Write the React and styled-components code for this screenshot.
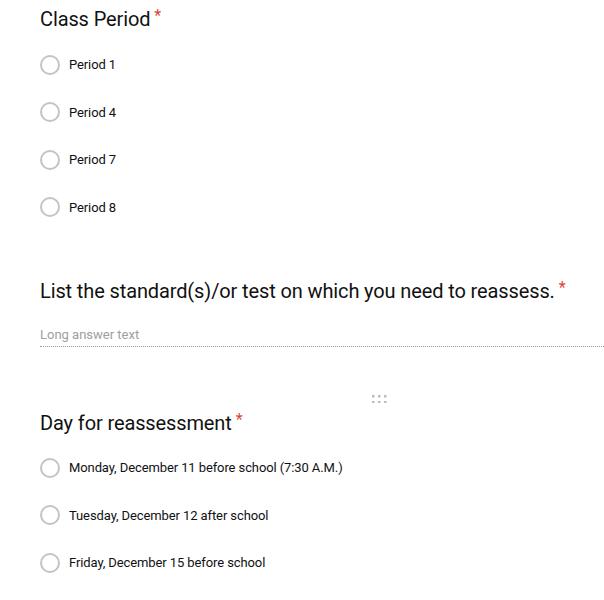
import React from 'react';
import styled, { createGlobalStyle } from 'styled-components';

const GlobalStyle = createGlobalStyle`
  html, body {
    margin: 0;
    padding: 0;
    background: #fff;
  }
  body {
    font-family: Roboto, "Liberation Sans", Arial, sans-serif;
    color: #000;
  }
`;

const Form = styled.div`
  width: 564px;
  padding: 7px 0 0 40px;
`;

const Question = styled.section`
  display: flex;
  flex-direction: column;
  margin-bottom: ${({ $gap }) => $gap || 0}px;
`;

const Title = styled.h2`
  margin: 0 0 ${({ $after }) => $after || 10}px;
  font-size: 20px;
  line-height: 24px;
  font-weight: 400;
  color: #111;
  letter-spacing: -0.12px;
  white-space: nowrap;
`;

const Required = styled.span`
  color: #db4437;
  font-size: 16px;
  vertical-align: top;
  margin-left: 4px;
  position: relative;
  top: -3px;
`;

const Options = styled.div`
  display: flex;
  flex-direction: column;
`;

const OptionRow = styled.label`
  display: flex;
  align-items: center;
  height: 47.5px;
  gap: 9px;
  font-size: 13px;
  letter-spacing: -0.1px;
  color: #111;
`;

const Circle = styled.span`
  box-sizing: border-box;
  width: 20px;
  height: 20px;
  border-radius: 50%;
  border: 2px solid #c4c4c4;
  flex: none;
`;

const LongAnswer = styled.div`
  margin-top: 14px;
  font-size: 13px;
  line-height: 16px;
  color: #9e9e9e;
  padding-bottom: 3px;
  border-bottom: 1px dotted rgba(0, 0, 0, 0.4);
`;

const HandleRow = styled.div`
  display: flex;
  padding-left: 331px;
  margin: 48px 0 8px;
`;

const Dots = styled.svg`
  display: block;
`;

const DragHandle = () => (
  <Dots width="16" height="8" viewBox="0 0 16 8">
    {[0, 6, 12].map((x) =>
      [0, 6].map((y) => (
        <rect key={`${x}-${y}`} x={x + 1} y={y} width="2.5" height="2.5" fill="#bdbdbd" />
      ))
    )}
  </Dots>
);

const Radio = ({ label }) => (
  <OptionRow>
    <Circle />
    {label}
  </OptionRow>
);

export default function App() {
  return (
    <>
      <GlobalStyle />
      <Form>
        <Question $gap={48}>
          <Title>
            Class Period<Required>*</Required>
          </Title>
          <Options>
            {['Period 1', 'Period 4', 'Period 7', 'Period 8'].map((p) => (
              <Radio key={p} label={p} />
            ))}
          </Options>
        </Question>

        <Question>
          <Title $after={0}>
            List the standard(s)/or test on which you need to reassess.<Required>*</Required>
          </Title>
          <LongAnswer>Long answer text</LongAnswer>
        </Question>

        <HandleRow>
          <DragHandle />
        </HandleRow>

        <Question>
          <Title $after={9}>
            Day for reassessment<Required>*</Required>
          </Title>
          <Options>
            {[
              'Monday, December 11 before school (7:30 A.M.)',
              'Tuesday, December 12 after school',
              'Friday, December 15 before school',
            ].map((d) => (
              <Radio key={d} label={d} />
            ))}
          </Options>
        </Question>
      </Form>
    </>
  );
}
